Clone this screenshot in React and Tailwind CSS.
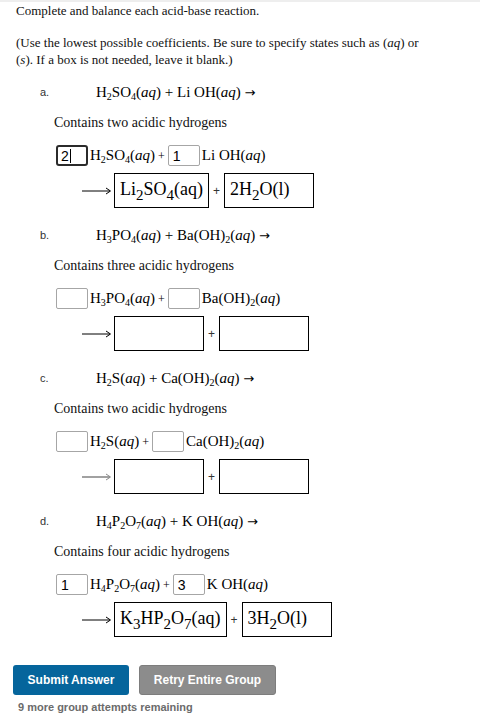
import React from 'react';

function Sub({ children }) {
  return <span className="relative top-[3px] text-[10px] leading-none">{children}</span>;
}

function PSub({ children }) {
  return <span className="relative top-[5px] text-[15px] leading-none">{children}</span>;
}

function Aq() {
  return (
    <span>
      (<i>aq</i>)
    </span>
  );
}

function Coef({ value, focused }) {
  if (focused) {
    return (
      <span className="inline-flex h-[21px] w-[32px] items-center rounded-[3px] border-2 border-[#2b2b2b] bg-white px-[3px] font-['Liberation_Sans',Arial,sans-serif] text-[14px] leading-none text-black">
        {value}
        <span className="ml-[1px] inline-block h-[14px] w-[1px] bg-black" />
      </span>
    );
  }
  return (
    <span className="inline-flex h-[21px] w-[32px] items-center rounded-[2px] border border-[#a6a6a6] bg-white px-[4px] font-['Liberation_Sans',Arial,sans-serif] text-[14px] leading-none text-black">
      {value}
    </span>
  );
}

function Arrow({ gray }) {
  const c = gray ? '#8a8a8a' : '#000';
  return (
    <svg width="30" height="10" viewBox="0 0 30 10" className="mr-[2px]">
      <line x1="0" y1="5" x2="28" y2="5" stroke={c} strokeWidth={gray ? 1.6 : 1} />
      <path d="M24 2 L28.5 5 L24 8" fill="none" stroke={c} strokeWidth="1" />
    </svg>
  );
}

function ProductBox({ children }) {
  return (
    <div className="flex h-[35px] min-w-[90px] items-center border border-black px-[5px] pb-[3px] font-['Liberation_Serif','Times_New_Roman',serif] text-[18px] leading-none text-black">
      <span>{children}</span>
    </div>
  );
}

const sections = [
  {
    label: 'a.',
    eq: (
      <>
        H<Sub>2</Sub>SO<Sub>4</Sub><Aq /> + Li OH<Aq />
      </>
    ),
    contains: 'Contains two acidic hydrogens',
    c1: '2',
    focused: true,
    r1: (
      <>
        H<Sub>2</Sub>SO<Sub>4</Sub><Aq />
      </>
    ),
    c2: '1',
    r2: (
      <>
        Li OH<Aq />
      </>
    ),
    p1: (
      <>
        Li<PSub>2</PSub>SO<PSub>4</PSub>(aq)
      </>
    ),
    p2: (
      <>
        2H<PSub>2</PSub>O(l)
      </>
    ),
  },
  {
    label: 'b.',
    eq: (
      <>
        H<Sub>3</Sub>PO<Sub>4</Sub><Aq /> + Ba(OH)<Sub>2</Sub><Aq />
      </>
    ),
    contains: 'Contains three acidic hydrogens',
    c1: '',
    r1: (
      <>
        H<Sub>3</Sub>PO<Sub>4</Sub><Aq />
      </>
    ),
    c2: '',
    r2: (
      <>
        Ba(OH)<Sub>2</Sub><Aq />
      </>
    ),
  },
  {
    label: 'c.',
    eq: (
      <>
        H<Sub>2</Sub>S<Aq /> + Ca(OH)<Sub>2</Sub><Aq />
      </>
    ),
    contains: 'Contains two acidic hydrogens',
    c1: '',
    r1: (
      <>
        H<Sub>2</Sub>S<Aq />
      </>
    ),
    c2: '',
    r2: (
      <>
        Ca(OH)<Sub>2</Sub><Aq />
      </>
    ),
    grayArrow: true,
  },
  {
    label: 'd.',
    eq: (
      <>
        H<Sub>4</Sub>P<Sub>2</Sub>O<Sub>7</Sub><Aq /> + K OH<Aq />
      </>
    ),
    contains: 'Contains four acidic hydrogens',
    c1: '1',
    r1: (
      <>
        H<Sub>4</Sub>P<Sub>2</Sub>O<Sub>7</Sub><Aq />
      </>
    ),
    c2: '3',
    r2: (
      <>
        K OH<Aq />
      </>
    ),
    p1: (
      <>
        K<PSub>3</PSub>HP<PSub>2</PSub>O<PSub>7</PSub>(aq)
      </>
    ),
    p2: (
      <>
        3H<PSub>2</PSub>O(l)
      </>
    ),
  },
];

function Section({ s, first }) {
  return (
    <div className={first ? 'mt-[14px]' : 'mt-[17px]'}>
      <div className="flex h-[20px] items-center">
        <span className="w-[80px] pl-[24px] font-['Liberation_Sans',Arial,sans-serif] text-[11px] text-[#333]">{s.label}</span>
        <span className="font-['Liberation_Serif','Times_New_Roman',serif] text-[15px] text-black">
          {s.eq} <span className="font-['DejaVu_Sans',sans-serif] text-[13px]">→</span>
        </span>
      </div>
      <div className="mt-[10px] flex h-[20px] items-center pl-[38px] font-['Liberation_Serif','Times_New_Roman',serif] text-[14px] text-[#111]">
        {s.contains}
      </div>
      <div className="mt-[13px] flex h-[21px] items-center pl-[40px] font-['Liberation_Serif','Times_New_Roman',serif] text-[15px] text-black">
        <Coef value={s.c1} focused={s.focused} />
        <span className="ml-[2px]">{s.r1}</span>
        <span className="mx-[3px] text-[12px]">+</span>
        <Coef value={s.c2} />
        <span className="ml-[2px]">{s.r2}</span>
      </div>
      <div className="mt-[7px] flex items-center pl-[66px]">
        <Arrow gray={s.grayArrow} />
        <ProductBox>{s.p1}</ProductBox>
        <span className="mx-[4px] font-['Liberation_Sans',Arial,sans-serif] text-[12px] text-[#333]">+</span>
        <ProductBox>{s.p2}</ProductBox>
      </div>
    </div>
  );
}

export default function App() {
  return (
    <div className="min-h-[724px] w-[480px] bg-white">
      <div className="h-[2px] bg-[#eeeeee]" />
      <div className="pl-[16px] font-['Liberation_Serif','Times_New_Roman',serif] text-[13px] leading-[17px] text-[#111]">
        <p>Complete and balance each acid-base reaction.</p>
        <p className="mt-[15px]">
          (Use the lowest possible coefficients. Be sure to specify states such as (<i>aq</i>) or
          <br />
          (<i>s</i>). If a box is not needed, leave it blank.)
        </p>
      </div>

      <div className="pl-[16px]">
        {sections.map((s, i) => (
          <Section key={s.label} s={s} first={i === 0} />
        ))}
      </div>

      <div className="mt-[28px] flex gap-[10px] pl-[13px] font-['Liberation_Sans',Arial,sans-serif]">
        <button className="h-[30px] w-[116px] rounded-[3px] bg-[#05659c] text-[12px] font-bold text-white">
          Submit Answer
        </button>
        <button className="h-[30px] w-[137px] rounded-[3px] border border-[#7d7d7d] bg-[#8c8c8c] text-[12px] font-bold text-white">
          Retry Entire Group
        </button>
      </div>
      <p className="mt-[4px] pl-[18px] font-['Liberation_Sans',Arial,sans-serif] text-[11px] font-bold text-[#6b6b6b]">
        9 more group attempts remaining
      </p>
    </div>
  );
}
